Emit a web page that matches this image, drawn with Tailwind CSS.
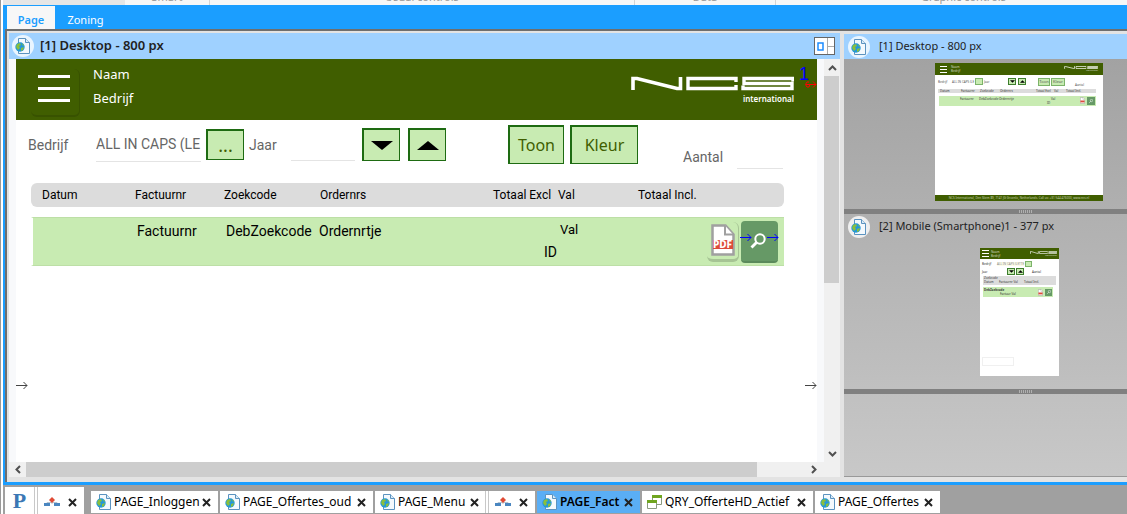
<!DOCTYPE html>
<html lang="nl">
<head>
    <meta charset="UTF-8">
    <meta name="viewport" content="width=device-width, initial-scale=1.0">
    <title>PAGE_Fact</title>
    <script src="https://cdn.jsdelivr.net/npm/@tailwindcss/browser@4"></script>
</head>
<body class="h-screen overflow-hidden flex flex-col bg-white border-l border-[#999999] pl-[2px] font-['Noto_Sans',sans-serif] text-xs text-[#222222]">

    <!-- Shared icons -->
    <svg class="hidden" aria-hidden="true">
        <symbol id="page" viewBox="0 0 16 16">
            <path d="M3.5.5h7l4 4v11h-11z" fill="#f4f9fd" stroke="#5b93c0"/>
            <path d="M10.5.5v4h4" fill="#dcebf7" stroke="#5b93c0"/>
            <circle cx="5" cy="9" r="4.7" fill="#2498d8"/>
            <path d="M2 6l3-1 1 2-2 1 1 2-2 2-2-3zM7 5l2 2-1 1zM6 10l3-1-1 3-2 1z" fill="#8abf3c"/>
        </symbol>
        <symbol id="schema" viewBox="0 0 16 10">
            <path d="M8 4v3M3 7V5.500h10V7" fill="none" stroke="#b8c4d0"/>
            <path d="M8 0l3 3-3 3-3-3z" fill="#e04a35"/>
            <path d="M0 6h6v3H0zM10 6h6v3h-6z" fill="#4a86c0"/>
        </symbol>
        <symbol id="close" viewBox="0 0 9 9">
            <path d="M1 1l7 7M8 1L1 8" fill="none" stroke="#222" stroke-width="2"/>
        </symbol>
        <symbol id="logo" viewBox="0 0 164 15" preserveAspectRatio="none">
            <path d="M3 14V2.500h4L47 12.500h3.500V1" fill="none" stroke="#fff" stroke-width="3.600"/>
            <path d="M106 6V2.500H58v10h48V9" fill="none" stroke="#fff" stroke-width="3.400"/>
            <path d="M163 5.500V2.500h-49v5h48v5h-49V9.500" fill="none" stroke="#fff" stroke-width="3.400"/>
        </symbol>
        <symbol id="pdf" viewBox="0 0 24 32">
            <path d="M1.500 1.500h13l8 9v20h-21z" fill="#fff" stroke="#a0a0a0" stroke-width="2.500"/>
            <path d="M14 1.500v9h8" fill="#fff" stroke="#a0a0a0" stroke-width="2"/>
            <path d="M2 16h20v9H2z" fill="#dd4b3a"/>
        </symbol>
        <symbol id="search" viewBox="0 0 16 16">
            <circle cx="10" cy="6" r="4.700" fill="none" stroke="#fff" stroke-width="2"/>
            <path d="M6.500 9.500L1.500 14.500" stroke="#fff" stroke-width="2.800"/>
        </symbol>
        <symbol id="arrow" viewBox="0 0 12 9">
            <path d="M0 4.500h11M7.500 1L11 4.500 7.500 8" fill="none" stroke="currentColor"/>
        </symbol>
    </svg>

    <!-- Ribbon, scrolled almost out of view -->
    <header class="h-[5px] shrink-0 overflow-hidden flex items-end bg-[#f7f7f7] text-[#999999] text-[11px]">
        <div class="w-[122px] h-full bg-[#e6e6e6]"></div>
        <div class="w-[85px] h-full flex items-end justify-center border-r border-[#d4d4d4]"><span class="leading-4">Smart</span></div>
        <div class="w-[425px] h-full flex items-end justify-center border-r border-[#d4d4d4]"><span class="leading-4">Usual controls</span></div>
        <div class="w-[141px] h-full flex items-end justify-center border-r border-[#d4d4d4]"><span class="leading-4">Data</span></div>
        <div class="flex-1 h-full flex items-end justify-center pl-6"><span class="leading-4">Graphic controls</span></div>
    </header>

    <nav class="h-6 shrink-0 flex items-end bg-[#1b9eff] pl-1">
        <button class="w-12 h-[23px] pt-1 bg-[#f7f7f7] text-[#1b9eff] text-[11px] font-semibold leading-none">Page</button>
        <button class="w-[61px] h-[23px] pt-1 text-white text-[11px] leading-none">Zoning</button>
    </nav>

    <main class="flex-1 min-h-0 flex border-l-2 border-b-3 border-[#1b9eff]">
        <div class="flex-1 min-w-0 flex border-l-2 border-t-2 border-[#6e6e6e] bg-[#e3e3e3] pt-[2px] pl-[2px] pb-[5px]">

            <!-- Active view -->
            <section class="flex-1 min-w-0 flex flex-col">
                <div class="h-[26px] shrink-0 flex items-center bg-[#9fd1ff] pl-[3px] pr-[5px]">
                    <span class="size-[22px] rounded-full bg-[#e9f5ff] flex items-center justify-center"><svg class="size-4"><use href="#page"/></svg></span>
                    <h1 class="ml-[6px] flex-1 text-[13px] font-semibold">[1] Desktop - 800 px</h1>
                    <button class="w-[21px] h-[18px] border border-[#666666] bg-white" aria-label="Layout">
                        <svg class="w-[19px] h-4" viewBox="0 0 19 16"><path d="M3 5h5v7H3z" fill="none" stroke="#1b8cff" stroke-width="1.500"/><path d="M12.500 0v16M12.500 8.500H19" stroke="#aaa"/></svg>
                    </button>
                </div>

                <div class="flex-1 min-h-0 flex">
                    <div class="flex-1 min-w-0 flex flex-col">
                        <div class="flex-1 min-h-0 overflow-hidden bg-[#f8f9fb] pl-[7px]">
                            <div class="relative w-[801px] h-full bg-white font-[Roboto,sans-serif]">

                                <div class="h-[61px] flex items-start bg-[#405e00] text-white pl-[15px] pr-[23px] font-['Noto_Sans',sans-serif]">
                                    <button class="mt-[10px] w-[49px] h-12 rounded-md border-b-2 border-r border-[#385200] flex flex-col items-center pt-[6px] gap-[9px] pr-[2px]" aria-label="Menu">
                                        <span class="w-8 h-[3px] bg-white"></span>
                                        <span class="w-8 h-[3px] bg-white"></span>
                                        <span class="w-8 h-[3px] bg-white"></span>
                                    </button>
                                    <div class="ml-[13px] mt-[3px] flex-1 text-[13px] leading-6">
                                        <p>Naam</p>
                                        <p>Bedrijf</p>
                                    </div>
                                    <div class="mt-[17px] w-[164px] text-right">
                                        <svg class="w-[164px] h-[15px]"><use href="#logo"/></svg>
                                        <p class="text-[8px] leading-4 font-semibold">international</p>
                                    </div>
                                </div>

                                <form class="h-[49px] flex items-center pl-3 text-sm text-[#666666]">
                                    <label for="bedrijf" class="w-[68px]">Bedrijf</label>
                                    <input id="bedrijf" class="w-[105px] h-[34px] border-b border-[#e4e4e4] text-sm" value="ALL IN CAPS (LE">
                                    <button type="button" class="ml-[5px] w-[38px] h-[31px] border border-t-2 border-l-2 border-[#1e6b12] bg-[#c8ebb2] text-[#405e00] text-lg leading-none font-['Noto_Sans',sans-serif]">...</button>
                                    <label for="jaar" class="ml-[5px] w-[42px]">Jaar</label>
                                    <input id="jaar" class="w-16 h-8 border-b border-[#e4e4e4]">
                                    <button type="button" class="ml-[7px] w-[38px] h-[33px] border border-t-2 border-l-2 border-[#1e6b12] bg-[#c8ebb2] flex items-center justify-center" aria-label="Omlaag"><svg class="w-[22px] h-[9px]" viewBox="0 0 22 9"><path d="M0 0h22L11 9z"/></svg></button>
                                    <button type="button" class="ml-2 w-[38px] h-[33px] border border-t-2 border-l-2 border-[#1e6b12] bg-[#c8ebb2] flex items-center justify-center" aria-label="Omhoog"><svg class="w-[22px] h-[9px]" viewBox="0 0 22 9"><path d="M0 9h22L11 0z"/></svg></button>
                                    <button type="button" class="ml-[62px] w-14 h-[39px] border border-t-2 border-l-2 border-[#1e6b12] bg-[#c8ebb2] text-[#405e00] text-base font-['Noto_Sans',sans-serif]">Toon</button>
                                    <button type="button" class="ml-[6px] w-[68px] h-[39px] border border-t-2 border-l-2 border-[#1e6b12] bg-[#c8ebb2] text-[#405e00] text-base font-['Noto_Sans',sans-serif]">Kleur</button>
                                    <label for="aantal" class="ml-[45px] w-[54px] self-end leading-6">Aantal</label>
                                    <input id="aantal" class="w-[46px] h-7 self-end border-b border-[#e4e4e4]">
                                </form>

                                <table class="ml-[15px] mt-1 w-[753px] table-fixed border-separate border-spacing-x-0 border-spacing-y-[10px] text-left text-black">
                                    <colgroup>
                                        <col class="w-[102px]"><col class="w-[89px]"><col class="w-[95px]"><col class="w-[173px]"><col class="w-[67px]"><col class="w-[79px]"><col class="w-[69px]"><col>
                                    </colgroup>
                                    <thead>
                                        <tr class="h-6 text-xs">
                                            <th class="bg-[#dcdcdc] rounded-l-md pl-[11px] font-normal">Datum</th>
                                            <th class="bg-[#dcdcdc] pl-[2px] font-normal">Factuurnr</th>
                                            <th class="bg-[#dcdcdc] pl-[2px] font-normal">Zoekcode</th>
                                            <th class="bg-[#dcdcdc] pl-[3px] font-normal">Ordernrs</th>
                                            <th class="bg-[#dcdcdc] pl-[3px] font-normal">Totaal Excl</th>
                                            <th class="bg-[#dcdcdc] pl-[1px] font-normal">Val</th>
                                            <th class="bg-[#dcdcdc] pl-[2px] font-normal">Totaal Incl.</th>
                                            <th class="bg-[#dcdcdc] rounded-r-md"></th>
                                        </tr>
                                    </thead>
                                    <tbody>
                                        <tr class="h-[49px] text-sm">
                                            <td class="bg-[#c8ebb2] bg-clip-padding border-y border-l-2 border-y-[#bddfa6] border-l-white"></td>
                                            <td class="bg-[#c8ebb2] border-y border-[#bddfa6] align-top pt-[3px] pl-1">Factuurnr</td>
                                            <td class="bg-[#c8ebb2] border-y border-[#bddfa6] align-top pt-[3px] pl-1">DebZoekcode</td>
                                            <td class="bg-[#c8ebb2] border-y border-[#bddfa6] align-top pt-[3px] pl-[2px]">Ordernrtje</td>
                                            <td class="bg-[#c8ebb2] border-y border-[#bddfa6] align-bottom text-right pb-[3px]">ID</td>
                                            <td class="bg-[#c8ebb2] border-y border-[#bddfa6] align-top pt-[3px] pl-[3px] text-[13px]">Val</td>
                                            <td class="bg-[#c8ebb2] border-y border-[#bddfa6]"></td>
                                            <td class="bg-[#c8ebb2] border-y border-[#bddfa6]">
                                                <div class="flex items-center gap-[2px] pl-[2px]">
                                                    <button class="relative w-8 h-10 rounded-md border-b-3 border-r border-[#a6c494] flex items-center justify-center" aria-label="PDF">
                                                        <svg class="w-6 h-8"><use href="#pdf"/></svg>
                                                        <span class="absolute inset-x-0 top-[18px] text-center text-white text-[10px] leading-[9px] font-extrabold font-['Noto_Sans',sans-serif]">PDF</span>
                                                    </button>
                                                    <button class="relative w-[37px] h-[42px] shrink-0 rounded bg-[#669966] border-b-2 border-[#5b8a5b] flex items-center justify-center pr-[3px]" aria-label="Zoeken">
                                                        <svg class="size-4"><use href="#search"/></svg>
                                                        <svg class="absolute -left-px top-3 w-3 h-[9px] text-[#0000ff]"><use href="#arrow"/></svg>
                                                        <svg class="absolute -right-px top-3 w-3 h-[9px] text-[#0000ff]"><use href="#arrow"/></svg>
                                                    </button>
                                                </div>
                                            </td>
                                        </tr>
                                    </tbody>
                                </table>

                                <!-- Anchor markers drawn over the canvas -->
                                <span class="absolute right-2 top-[5px] text-[18px] leading-5 text-[#0000ff] font-['Liberation_Sans',sans-serif]">1</span>
                                <svg class="absolute right-0 top-[21px] w-3 h-[9px] text-[#ff0000]" viewBox="0 0 12 9"><path d="M1 4.500h10M8 1.500l3 3-3 3M4 2H2L.500 4.500 2 7h2l1-2.500" fill="none" stroke="currentColor"/></svg>
                                <svg class="absolute left-0 top-[322px] w-3 h-[9px] text-[#444444]"><use href="#arrow"/></svg>
                                <svg class="absolute right-0 top-[322px] w-3 h-[9px] text-[#444444]"><use href="#arrow"/></svg>
                            </div>
                        </div>

                        <div class="h-[15px] shrink-0 flex items-center bg-[#f0f0f0] text-[#505050]">
                            <button class="w-[17px] h-full flex items-center justify-center" aria-label="Scroll left"><svg class="w-[6px] h-[9px]" viewBox="0 0 6 9"><path d="M5 1L1.500 4.500 5 8" fill="none" stroke="currentColor" stroke-width="2"/></svg></button>
                            <div class="flex-1 h-full"><div class="w-[94%] h-full bg-[#cdcdcd]"></div></div>
                            <button class="w-5 h-full flex items-center justify-center" aria-label="Scroll right"><svg class="w-[6px] h-[9px]" viewBox="0 0 6 9"><path d="M1 1l3.500 3.500L1 8" fill="none" stroke="currentColor" stroke-width="2"/></svg></button>
                        </div>
                    </div>

                    <div class="w-4 shrink-0 flex flex-col bg-[#f0f0f0] pb-[15px] text-[#505050]">
                        <button class="h-[17px] flex items-center justify-center" aria-label="Scroll up"><svg class="w-[9px] h-[6px]" viewBox="0 0 9 6"><path d="M1 5l3.500-3.500L8 5" fill="none" stroke="currentColor" stroke-width="2"/></svg></button>
                        <div class="flex-1 pr-px"><div class="h-[56%] bg-[#cdcdcd]"></div></div>
                        <button class="h-[17px] flex items-center justify-center" aria-label="Scroll down"><svg class="w-[9px] h-[6px]" viewBox="0 0 9 6"><path d="M1 1l3.500 3.500L8 1" fill="none" stroke="currentColor" stroke-width="2"/></svg></button>
                    </div>
                </div>
            </section>

            <!-- Other views -->
            <aside class="ml-1 mt-px w-[283px] shrink-0 flex flex-col bg-linear-to-b from-[#a0a0a0] to-[#c8c8c8] border-b border-[#999999]">
                <div class="h-[25px] shrink-0 flex items-center bg-[#9fd1ff] pl-1">
                    <span class="size-[22px] rounded-full bg-[#e9f5ff] flex items-center justify-center"><svg class="size-4"><use href="#page"/></svg></span>
                    <h2 class="ml-[9px] text-[11px]">[1] Desktop - 800 px</h2>
                </div>
                <div class="h-[150px] shrink-0 pt-1 pl-[91px]">
                    <div class="w-[168px] h-[138px] bg-white flex flex-col text-[3px] leading-[4px] text-[#333333]">
                        <div class="h-3 flex items-center bg-[#405e00] px-[5px] text-[#d0d8c0]">
                            <span class="w-[7px] h-[7px] border-y border-white flex items-center"><span class="w-full h-px bg-white"></span></span>
                            <div class="ml-1 flex-1"><p>Naam</p><p>Bedrijf</p></div>
                            <div class="text-right"><svg class="w-[34px] h-[3px]"><use href="#logo"/></svg><p class="text-[2px] leading-[3px]">international</p></div>
                        </div>
                        <div class="h-3 flex items-center pl-[3px] pt-px text-[#555555]">
                            <span class="w-[14px]">Bedrijf</span>
                            <span class="w-[23px] whitespace-nowrap">ALL IN CAPS (LE</span>
                            <span class="w-2 h-[7px] border border-[#7cb36a] bg-[#c8ebb2]"></span>
                            <span class="ml-px w-6">Jaar</span>
                            <span class="w-2 h-[7px] border border-[#3d7d2c] bg-[#c8ebb2] flex items-center justify-center"><svg class="w-[5px] h-[3px]" viewBox="0 0 6 3"><path d="M0 0h6L3 3z"/></svg></span>
                            <span class="ml-[2px] w-2 h-[7px] border border-[#3d7d2c] bg-[#c8ebb2] flex items-center justify-center"><svg class="w-[5px] h-[3px]" viewBox="0 0 6 3"><path d="M0 3h6L3 0z"/></svg></span>
                            <span class="ml-3 w-3 h-2 border border-[#7cb36a] bg-[#c8ebb2] text-center text-[4px] leading-[6px]">Toon</span>
                            <span class="ml-px w-[14px] h-2 border border-[#7cb36a] bg-[#c8ebb2] text-center text-[4px] leading-[6px]">Kleur</span>
                            <span class="ml-[10px] self-end">Aantal</span>
                        </div>
                        <div class="mx-[3px] mt-[2px] w-[158px] h-1 bg-[#dcdcdc] grid grid-cols-[21px_19px_20px_36px_18px_12px_auto] pl-[2px] whitespace-nowrap">
                            <span>Datum</span><span>Factuurnr</span><span>Zoekcode</span><span>Ordernrs</span><span>Totaal Excl</span><span>Val</span><span>Totaal Incl.</span>
                        </div>
                        <div class="ml-1 mt-[3px] w-[157px] h-[10px] bg-[#c8ebb2] flex items-start pl-[21px] pt-px">
                            <span class="w-[19px]">Factuurnr</span><span class="w-5">DebZoekcode</span><span class="w-12">Ordernrtje</span><span class="mt-1 w-1">ID</span><span class="w-[29px]">Val</span>
                            <svg class="w-[5px] h-[7px]"><use href="#pdf"/></svg>
                            <span class="ml-[2px] w-2 h-2 bg-[#669966] flex items-center justify-center"><svg class="size-1"><use href="#search"/></svg></span>
                        </div>
                        <p class="mt-auto h-[6px] bg-[#405e00] text-[#c5d0b0] text-center leading-[6px] whitespace-nowrap">NCS International, Den Sliem 89, 7141 JG Groenlo, Netherlands. Call us: +31 544 476000, www.ncs.nl</p>
                    </div>
                </div>
                <div class="h-[5px] shrink-0 bg-[#808080] flex items-center justify-center pl-20">
                    <div class="flex gap-px"><i class="w-px h-[3px] bg-[#b0b0b0]"></i><i class="w-px h-[3px] bg-[#b0b0b0]"></i><i class="w-px h-[3px] bg-[#b0b0b0]"></i><i class="w-px h-[3px] bg-[#b0b0b0]"></i><i class="w-px h-[3px] bg-[#b0b0b0]"></i><i class="w-px h-[3px] bg-[#b0b0b0]"></i><i class="w-px h-[3px] bg-[#b0b0b0]"></i></div>
                </div>

                <div class="h-[25px] shrink-0 flex items-center pl-1">
                    <span class="size-[22px] rounded-full bg-[#efefef] flex items-center justify-center"><svg class="size-4"><use href="#page"/></svg></span>
                    <h2 class="ml-[9px] text-[11px]">[2] Mobile (Smartphone)1 - 377 px</h2>
                </div>
                <div class="h-[150px] shrink-0 pt-[9px] pl-34">
                    <div class="w-[79px] h-32 bg-white flex flex-col text-[3px] leading-[4px] text-[#333333]">
                        <div class="h-[11px] flex items-center bg-[#405e00] px-[2px] text-[#d0d8c0]">
                            <span class="w-[7px] h-[7px] border-y border-white flex items-center"><span class="w-full h-px bg-white"></span></span>
                            <div class="ml-[2px] flex-1"><p>Naam</p><p>Bedrijf</p></div>
                            <div class="text-right"><svg class="w-[27px] h-[3px]"><use href="#logo"/></svg><p class="text-[2px] leading-[3px]">international</p></div>
                        </div>
                        <div class="h-2 mt-px flex items-center pl-[2px]">
                            <span class="w-[15px]">Bedrijf</span>
                            <span class="w-[27px] bg-[#fbfbe8] text-[#888888] whitespace-nowrap">ALL IN CAPS (LETTE</span>
                            <span class="ml-px w-[7px] h-[6px] border border-[#7cb36a] bg-[#c8ebb2]"></span>
                        </div>
                        <div class="h-[7px] flex items-center pl-[2px]">
                            <span class="w-[25px]">Jaar</span>
                            <span class="w-2 h-[7px] border border-[#3d7d2c] bg-[#c8ebb2] flex items-center justify-center"><svg class="w-[5px] h-[3px]" viewBox="0 0 6 3"><path d="M0 0h6L3 3z"/></svg></span>
                            <span class="ml-px w-2 h-[7px] border border-[#3d7d2c] bg-[#c8ebb2] flex items-center justify-center"><svg class="w-[5px] h-[3px]" viewBox="0 0 6 3"><path d="M0 3h6L3 0z"/></svg></span>
                            <span class="ml-2">Aantal</span>
                        </div>
                        <div class="mx-[3px] mt-px h-[9px] bg-[#dcdcdc] pl-px">
                            <p>Zoekcode</p>
                            <div class="grid grid-cols-[15px_25px_auto]"><span>Datum</span><span>Factuurnr Val</span><span>Totaal Incl.</span></div>
                        </div>
                        <div class="ml-[3px] mt-[2px] w-[70px] h-[10px] bg-[#c8ebb2] flex items-center pl-px">
                            <div class="w-[54px]"><p class="font-bold">DebZoekcode</p><p class="pl-4">Factuur Val</p></div>
                            <svg class="w-[5px] h-[7px]"><use href="#pdf"/></svg>
                            <span class="ml-[2px] size-[7px] bg-[#669966] flex items-center justify-center"><svg class="size-1"><use href="#search"/></svg></span>
                        </div>
                        <div class="mt-auto mb-[10px] ml-[2px] w-8 h-[9px] border border-[#f0f0f0]"></div>
                    </div>
                </div>
                <div class="h-[5px] shrink-0 bg-[#808080] flex items-center justify-center pl-20">
                    <div class="flex gap-px"><i class="w-px h-[3px] bg-[#b0b0b0]"></i><i class="w-px h-[3px] bg-[#b0b0b0]"></i><i class="w-px h-[3px] bg-[#b0b0b0]"></i><i class="w-px h-[3px] bg-[#b0b0b0]"></i><i class="w-px h-[3px] bg-[#b0b0b0]"></i><i class="w-px h-[3px] bg-[#b0b0b0]"></i><i class="w-px h-[3px] bg-[#b0b0b0]"></i></div>
                </div>
            </aside>
        </div>
    </main>

    <!-- Open documents -->
    <footer class="h-[29px] shrink-0 flex items-end bg-[#a0a0a0] pl-[2px] text-black whitespace-nowrap font-['Noto_Sans',sans-serif]">
        <button class="w-[29px] h-[27px] bg-white flex items-center justify-center text-[22px] leading-none font-bold text-[#3b78b5] font-['Liberation_Serif',serif]">P</button>
        <div class="w-1 h-[27px] bg-white border-x border-[#c8c8c8]"></div>
        <div class="w-[46px] h-[27px] bg-white flex items-center justify-between pt-[3px] pl-[6px] pr-[7px]">
            <svg class="w-4 h-[10px]"><use href="#schema"/></svg>
            <button aria-label="Close"><svg class="size-[9px]"><use href="#close"/></svg></button>
        </div>
        <div class="ml-[7px] mb-px h-[22px] flex gap-[2px]">
            <div class="w-[127px] bg-white flex items-center pl-[5px] pr-[7px]">
                <svg class="size-4 shrink-0"><use href="#page"/></svg><a href="#" class="ml-[2px] flex-1">PAGE_Inloggen</a>
                <button aria-label="Close"><svg class="size-[9px]"><use href="#close"/></svg></button>
            </div>
            <div class="w-[153px] bg-white flex items-center pl-[5px] pr-[7px]">
                <svg class="size-4 shrink-0"><use href="#page"/></svg><a href="#" class="ml-[2px] flex-1">PAGE_Offertes_oud</a>
                <button aria-label="Close"><svg class="size-[9px]"><use href="#close"/></svg></button>
            </div>
            <div class="w-40 bg-white flex items-center pl-[5px] pr-[7px]">
                <svg class="size-4 shrink-0"><use href="#page"/></svg><a href="#" class="ml-[2px] flex-1">PAGE_Menu</a>
                <button aria-label="Close"><svg class="size-[9px]"><use href="#close"/></svg></button>
                <span class="ml-[6px] w-1 h-full border-x border-[#c8c8c8]"></span>
                <svg class="ml-[6px] mr-2 w-4 h-[10px]"><use href="#schema"/></svg>
                <button aria-label="Close"><svg class="size-[9px]"><use href="#close"/></svg></button>
            </div>
            <div class="w-[103px] bg-[#5aaef5] flex items-center pl-[5px] pr-[7px]">
                <svg class="size-4 shrink-0"><use href="#page"/></svg><a href="#" class="ml-[2px] flex-1 font-semibold">PAGE_Fact</a>
                <button aria-label="Close"><svg class="size-[9px]"><use href="#close"/></svg></button>
            </div>
            <div class="w-[171px] bg-white flex items-center pl-[5px] pr-[7px]">
                <svg class="size-4 shrink-0" viewBox="0 0 16 16"><path d="M5.500 1.500h9v9h-9z" fill="#fff" stroke="#8a9a80"/><path d="M5 1h10v3H5z" fill="#6fa51f"/><path d="M.500 6.500h9v8h-9z" fill="#fff" stroke="#8a9a80"/><path d="M0 6h10v3H0z" fill="#6fa51f"/></svg><a href="#" class="ml-[2px] flex-1">QRY_OfferteHD_Actief</a>
                <button aria-label="Close"><svg class="size-[9px]"><use href="#close"/></svg></button>
            </div>
            <div class="w-[125px] bg-white flex items-center pl-[5px] pr-[7px]">
                <svg class="size-4 shrink-0"><use href="#page"/></svg><a href="#" class="ml-[2px] flex-1">PAGE_Offertes</a>
                <button aria-label="Close"><svg class="size-[9px]"><use href="#close"/></svg></button>
            </div>
        </div>
    </footer>
</body>
</html>
